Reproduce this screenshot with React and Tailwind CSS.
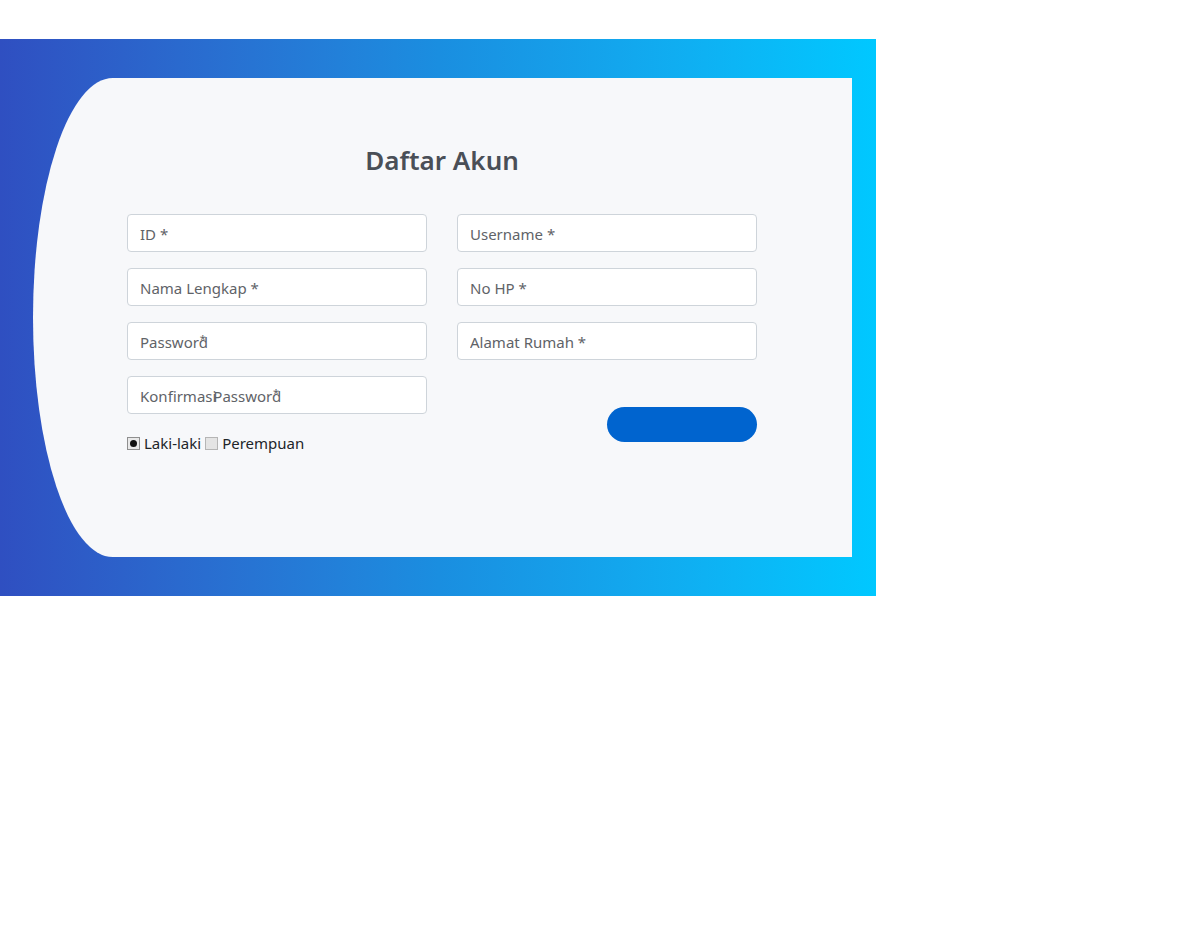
import React from "react";

const font = { fontFamily: '"Noto Sans", "Open Sans", sans-serif' };

const Field = ({ placeholder, overlay }) => (
  <div className="relative">
    <input
      type="text"
      placeholder={overlay ? "" : placeholder}
      className="w-full h-[38px] rounded-[4px] border border-[#ced4da] bg-white px-[12px] pt-[2px] text-[15px] text-[#495057] placeholder:text-[#5f6368] outline-none"
    />
    {overlay && (
      <span className="pointer-events-none absolute left-[13px] top-[9px] text-[15px] text-[#5f6368]">
        {overlay}
      </span>
    )}
  </div>
);

const PasswordLabel = () => (
  <>
    Passwor<span className="relative">d<span className="absolute -top-[1px] left-[1px] text-[11px]">*</span></span>
  </>
);

const App = () => {
  return (
    <div className="bg-white min-h-[952px] pt-[39px]" style={font}>
      <div className="w-[876px] h-[557px] bg-gradient-to-r from-[#2f4fc1] via-[#1a8ee0] to-[#00c8ff] pt-[39px] pl-[33px]">
        <div className="w-[819px] h-[479px] bg-[#f7f8fa] rounded-l-[80px_240px] flex flex-col items-center pt-[64px] pr-[1px]">
          <h1 className="text-[26px] leading-[36px] font-semibold text-[#4a4f57] mb-[36px]">
            Daftar Akun
          </h1>
          <div className="grid grid-cols-[300px_300px] gap-x-[30px]">
            <div className="flex flex-col gap-[16px]">
              <Field placeholder="ID *" />
              <Field placeholder="Nama Lengkap *" />
              <Field overlay={<PasswordLabel />} />
              <Field
                overlay={
                  <>
                    Konfirmas<span className="-mr-[3px]">i</span>
                    <PasswordLabel />
                  </>
                }
              />
              <div className="flex items-center gap-[4px] mt-[2px] text-[15px] text-[#212529]">
                <span className="w-[13px] h-[13px] border border-[#8f8f8f] bg-[#e9e9e9] flex items-center justify-center">
                  <span className="w-[7px] h-[7px] rounded-full bg-[#111]" />
                </span>
                <span>Laki-laki</span>
                <span className="w-[13px] h-[13px] border border-[#b5b5b5] bg-[#e4e4e4]" />
                <span>Perempuan</span>
              </div>
            </div>
            <div className="flex flex-col gap-[16px]">
              <Field placeholder="Username *" />
              <Field placeholder="No HP *" />
              <Field placeholder="Alamat Rumah *" />
              <div className="flex justify-end mt-[31px]">
                <button className="w-[150px] h-[35px] rounded-full bg-[#0064cf]" />
              </div>
            </div>
          </div>
        </div>
      </div>
    </div>
  );
};

export default App;
